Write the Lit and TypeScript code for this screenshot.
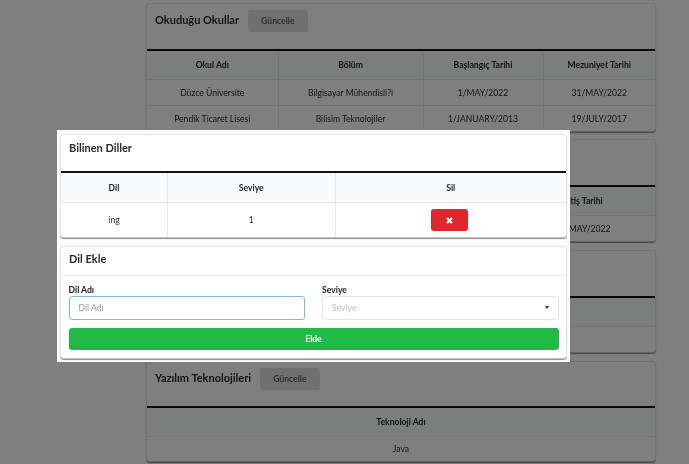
import { LitElement, html, css } from "lit";
import { customElement } from "lit/decorators.js";

interface Section {
  title: string;
  cols: string;
  head: string[];
  rows: string[][];
  cls?: string;
}

const sections: Section[] = [
  {
    title: "Okuduğu Okullar",
    cols: "130.5px 145px 120px 1fr",
    head: ["Okul Adı", "Bölüm", "Başlangıç Tarihi", "Mezuniyet Tarihi"],
    rows: [
      ["Düzce Üniversite", "Bilgisayar Mühendisli?i", "1/MAY/2022", "31/MAY/2022"],
      ["Pendik Ticaret Lisesi", "Bilisim Teknolojiler", "1/JANUARY/2013", "19/JULY/2017"],
    ],
    cls: "first",
  },
  {
    title: "İş Deneyimleri",
    cols: "130.5px 112px 120px 1fr",
    head: ["Şirket Adı", "Pozisyon", "Başlangıç Tarihi", "Bitiş Tarihi"],
    rows: [["Şirket", "Yazılımcı", "1/MAY/2022", "31/MAY/2022"]],
  },
  {
    title: "Bilinen Diller",
    cols: "1fr 1fr",
    head: ["Dil", "Seviye"],
    rows: [["ing", "1"]],
  },
  {
    title: "Yazılım Teknolojileri",
    cols: "1fr",
    head: ["Teknoloji Adı"],
    rows: [["Java"]],
    cls: "short",
  },
];

@customElement("app-root")
export class AppRoot extends LitElement {
  static styles = css`
    :host {
      display: block;
      position: relative;
      width: 689px;
      height: 464px;
      overflow: hidden;
      background: #fff;
      font-family: Lato, "Open Sans", sans-serif;
      font-size: 8.6px;
      color: rgba(0, 0, 0, 0.87);
    }
    * { box-sizing: border-box; }
    .page {
      width: 510px;
      margin-left: 146px;
      padding-top: 3px;
      display: flex;
      flex-direction: column;
      filter: blur(0.3px);
    }
    .card {
      flex: none;
      background: #fff;
      border: 1px solid #e4e4e5;
      border-bottom-color: #c4c4c4;
      border-radius: 4px;
      box-shadow: 0 1px 1px rgba(0, 0, 0, 0.45);
      margin-bottom: 8px;
    }
    .card.first { margin-bottom: 7px; }
    .head {
      height: 45px;
      padding: 5px 8px 0;
      display: flex;
      align-items: flex-start;
      gap: 9px;
    }
    .card.short .head { height: 44px; }
    .card.short .tr:not(.th) { height: 25px; }
    h3 {
      margin: 0;
      font-size: 11px;
      line-height: 22px;
      font-weight: 700;
      color: #2a2a2a;
    }
    .update {
      width: 59.5px;
      height: 22px;
      margin-top: 1px;
      border: 0;
      border-radius: 3px;
      background: #e0e1e2;
      color: rgba(0, 0, 0, 0.6);
      font: 700 8.6px Lato, sans-serif;
      padding: 0;
    }
    .tbl { border-top: 2px solid #111; }
    .tr { display: grid; height: 26px; border-top: 1px solid #e6e6e7; }
    .tr > div {
      display: flex;
      align-items: center;
      justify-content: center;
      border-left: 1px solid #e6e6e7;
      min-width: 0;
      white-space: nowrap;
      overflow: hidden;
    }
    .tr > div:first-child { border-left: 0; }
    .tr.th {
      height: 28px;
      border-top: 0;
      background: #f9fafb;
      font-weight: 700;
    }
    .dim {
      position: absolute;
      inset: 0;
      background: rgba(0, 0, 0, 0.5);
    }
    .modal {
      position: absolute;
      left: 57px;
      top: 130px;
      width: 513px;
      height: 232px;
      background: #fff;
      padding: 4px 3px 3px;
      display: flex;
      flex-direction: column;
      gap: 8px;
      filter: blur(0.3px);
    }
    .modal .card { margin: 0; }
    .langs { height: 104px; }
    .langs .head { height: 36px; padding-top: 2px; }
    .langs .cols { grid-template-columns: 106px 167.5px 1fr; }
    .langs .tr { height: 35px; }
    .langs .tr.th { height: 29px; }
    .del {
      width: 37px;
      height: 22.5px;
      margin-right: 2px;
      border: 0;
      border-radius: 3px;
      background: #df282b;
      padding: 0;
      display: flex;
      align-items: center;
      justify-content: center;
    }
    .del svg { width: 7px; height: 7px; display: block; }
    .add { height: 113px; }
    .add-head {
      height: 29px;
      padding: 0 8px 4px;
      display: flex;
      align-items: center;
      border-bottom: 1px solid #ececec;
    }
    .form {
      padding: 9px 7.5px 0;
      display: grid;
      grid-template-columns: 236.5px 236.5px;
      column-gap: 17px;
      row-gap: 8.5px;
    }
    .field { display: flex; flex-direction: column; }
    label {
      font-weight: 700;
      font-size: 8.6px;
      line-height: 11px;
      color: #222;
    }
    .input {
      height: 23.5px;
      border: 1px solid #e4e4e5;
      border-radius: 3px;
      padding: 0 9px;
      display: flex;
      align-items: center;
      justify-content: space-between;
      color: #bdbdbd;
    }
    .input.focus { border-color: #85b7d9; color: #9a9a9a; }
    .caret {
      width: 0;
      height: 0;
      border-left: 2.5px solid transparent;
      border-right: 2.5px solid transparent;
      border-top: 3px solid #333;
    }
    .submit {
      grid-column: 1 / -1;
      height: 21.5px;
      border: 0;
      border-radius: 3px;
      background: #21ba45;
      color: #fff;
      font: 700 8.8px Lato, sans-serif;
      padding: 0;
    }
  `;

  private section(s: Section) {
    const grid = `grid-template-columns:${s.cols}`;
    return html`<section class="card ${s.cls ?? ""}">
      <div class="head"><h3>${s.title}</h3><button class="update">Güncelle</button></div>
      <div class="tbl">
        <div class="tr th" style=${grid}>${s.head.map((h) => html`<div>${h}</div>`)}</div>
        ${s.rows.map(
          (r) => html`<div class="tr" style=${grid}>${r.map((c) => html`<div>${c}</div>`)}</div>`,
        )}
      </div>
    </section>`;
  }

  render() {
    return html`
      <main class="page">${sections.map((s) => this.section(s))}</main>
      <div class="dim"></div>
      <div class="modal">
        <section class="card langs">
          <div class="head"><h3>Bilinen Diller</h3></div>
          <div class="tbl">
            <div class="tr th cols"><div>Dil</div><div>Seviye</div><div>Sil</div></div>
            <div class="tr cols">
              <div>ing</div>
              <div>1</div>
              <div>
                <button class="del" aria-label="Sil">
                  <svg viewBox="0 0 10 10"><path d="M1.5 1.5 8.5 8.5M8.5 1.5 1.5 8.5" stroke="#fff" stroke-width="3" fill="none"/></svg>
                </button>
              </div>
            </div>
          </div>
        </section>
        <section class="card add">
          <div class="add-head"><h3>Dil Ekle</h3></div>
          <div class="form">
            <div class="field"><label>Dil Adı</label><div class="input focus">Dil Adı</div></div>
            <div class="field"><label>Seviye</label><div class="input">Seviye<span class="caret"></span></div></div>
            <button class="submit">Ekle</button>
          </div>
        </section>
      </div>
    `;
  }
}
